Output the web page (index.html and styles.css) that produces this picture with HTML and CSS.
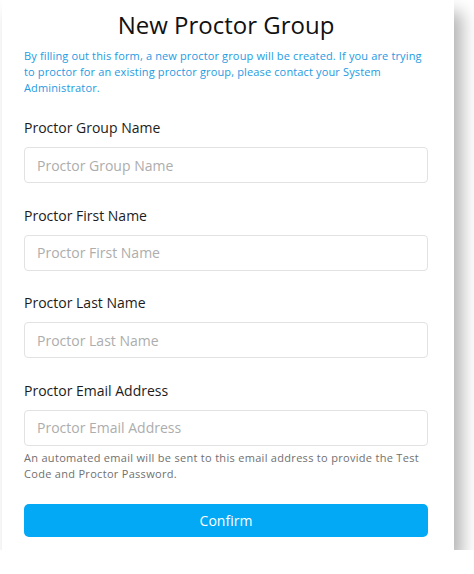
FILE: index.html
```html
<!DOCTYPE html>
<html lang="en">
<head>
  <meta charset="UTF-8" />
  <meta name="viewport" content="width=device-width, initial-scale=1" />
  <title>New Proctor Group</title>
  <link rel="stylesheet" href="styles.css">
</head>
<body>
  <div class="card">
    <h1>New Proctor Group</h1>
    <p class="intro">By filling out this form, a new proctor group will be created. If you are trying to proctor for an existing proctor group, please contact your System Administrator.</p>

    <form class="form">
      <div class="field">
        <label for="groupName">Proctor Group Name</label>
        <input id="groupName" type="text" placeholder="Proctor Group Name">
      </div>
      <div class="field">
        <label for="firstName">Proctor First Name</label>
        <input id="firstName" type="text" placeholder="Proctor First Name">
      </div>
      <div class="field">
        <label for="lastName">Proctor Last Name</label>
        <input id="lastName" type="text" placeholder="Proctor Last Name">
      </div>
      <div class="field">
        <label for="email">Proctor Email Address</label>
        <input id="email" type="email" placeholder="Proctor Email Address">
        <p class="help">An automated email will be sent to this email address to provide the Test Code and Proctor Password.</p>
      </div>
      <button type="button" class="confirm">Confirm</button>
    </form>
  </div>
</body>
</html>
```

FILE: styles.css
```css
body {
  margin: 0;
  background: #fff;
  font-family: 'Open Sans', sans-serif;
  color: #1c1c1c;
  overflow: hidden;
}
.card {
  width: 404px;
  margin-left: 2px;
  padding: 8px 26px 13px 22px;
  background: #fff;
  box-shadow: 8px 12px 16px rgba(0,0,0,0.3);
}
h1 {
  margin: 0;
  font-size: 24px;
  font-weight: 400;
  line-height: 34px;
  text-align: center;
  color: #111;
}
.intro {
  margin: 6px 0 0;
  font-size: 11px;
  line-height: 16px;
  letter-spacing: 0.14px;
  color: #1d9be2;
}
.form {
  margin-top: 22px;
}
.field {
  margin-bottom: 22.5px;
}
.field label {
  display: block;
  font-size: 14px;
  font-weight: 500;
  line-height: 20px;
  margin-bottom: 9px;
  color: #1c1c1c;
}
.field input {
  display: block;
  box-sizing: border-box;
  width: 100%;
  height: 36px;
  padding: 0 12px;
  border: 1px solid #e2e2e2;
  border-radius: 4px;
  font-family: inherit;
  font-size: 14px;
  color: #333;
}
.field input::placeholder {
  color: #adadad;
}
.help {
  margin: 4px 0 0;
  font-size: 11px;
  line-height: 16px;
  letter-spacing: 0.3px;
  color: #707070;
}
.confirm {
  display: block;
  width: 100%;
  height: 33px;
  border: none;
  border-radius: 5px;
  background: #03a9f4;
  color: #fff;
  font-family: inherit;
  font-size: 14px;
  font-weight: 500;
  cursor: pointer;
}
```
